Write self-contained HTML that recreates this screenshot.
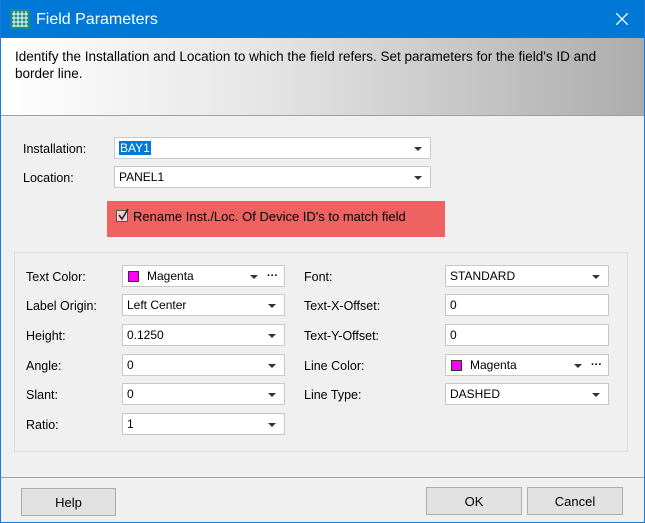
<!DOCTYPE html>
<html><head><style>
*{box-sizing:border-box;margin:0;padding:0}
body{width:645px;height:523px;overflow:hidden;font-family:"Liberation Sans",sans-serif;font-size:12px;color:#000;background:#f0f0f0;position:relative}
.a{position:absolute}
.win{left:0;top:0;width:645px;height:523px;border:1px solid #1a7ad4;border-top:none}
.title{left:0;top:0;width:645px;height:38px;background:#0078d7;color:#fff;font-size:16px}
.hdr{left:1px;top:38px;width:643px;height:78px;background:linear-gradient(90deg,#fff 0%,#e6e6e6 40%,#acacac 100%);border-bottom:1px solid #a0a0a0;font-size:13.5px;line-height:17px;padding:10px 14px}
.cb{background:#fff;border:1px solid #c8c8c8;height:22px;line-height:21px;padding-left:4px;font-size:12px}
.arr{position:absolute;right:8px;top:9px;width:0;height:0;border-left:4px solid transparent;border-right:4px solid transparent;border-top:4px solid #333}
.lbl{font-size:12.5px}
.sw{display:inline-block;width:11px;height:11px;background:#ff00ff;border:1px solid #333;vertical-align:-2px;margin-right:8px;margin-left:1px}
.dots{position:absolute;right:6px;top:0;font-weight:bold;font-size:11px;letter-spacing:0}
.btn{border:1px solid #adadad;background:#e1e1e1;text-align:center;line-height:27px;font-size:13px}
</style></head><body>
<div class="a title">
<svg class="a" style="left:10px;top:9px" width="20" height="20" viewBox="0 0 20 20"><rect width="20" height="20" fill="#1d8a8a"/><g stroke="#fff" stroke-width="1"><path d="M4 2v16M8 2v16M12 2v16M16 2v16M2 5h16M2 9h16M2 13h16M2 17h16"/></g></svg>
<div class="a" style="left:36px;top:11px">Field Parameters</div>
<svg class="a" style="left:616px;top:13px" width="12" height="12"><path d="M0 0L12 12M12 0L0 12" stroke="#fff" stroke-width="1.3"/></svg>
</div>
<div class="a hdr">Identify the Installation and Location to which the field refers. Set parameters for the field's ID and border line.</div>
<div class="a win"></div>

<div class="a lbl" style="left:23px;top:142px">Installation:</div>
<div class="a cb" style="left:114px;top:137px;width:317px"><span style="background:#0078d7;color:#fff;padding:0 1px">BAY1</span><div class="arr"></div></div>
<div class="a lbl" style="left:23px;top:171px">Location:</div>
<div class="a cb" style="left:114px;top:166px;width:317px">PANEL1<div class="arr"></div></div>

<div class="a" style="left:107px;top:201px;width:338px;height:36px;background:#ee6262"></div>
<div class="a" style="left:116px;top:210px;width:12px;height:12px;border:1px solid #555;background:#f4d0d0"></div>
<svg class="a" style="left:116px;top:207px" width="14" height="15"><path d="M3 8l3 4L12 2" stroke="#222" stroke-width="1.6" fill="none"/></svg>
<div class="a" style="left:133px;top:209px;font-size:13px">Rename Inst./Loc. Of Device ID's to match field</div>

<div class="a" style="left:14px;top:252px;width:614px;height:200px;border:1px solid #dcdcdc"></div>

<div class="a lbl" style="left:26px;top:270px">Text Color:</div>
<div class="a cb" style="left:122px;top:265px;width:163px"><span class="sw"></span>Magenta<div class="arr" style="right:26px"></div><span class="dots">···</span></div>
<div class="a lbl" style="left:26px;top:299px">Label Origin:</div>
<div class="a cb" style="left:122px;top:294px;width:163px">Left Center<div class="arr"></div></div>
<div class="a lbl" style="left:26px;top:329px">Height:</div>
<div class="a cb" style="left:122px;top:324px;width:163px">0.1250<div class="arr"></div></div>
<div class="a lbl" style="left:26px;top:359px">Angle:</div>
<div class="a cb" style="left:122px;top:354px;width:163px">0<div class="arr"></div></div>
<div class="a lbl" style="left:26px;top:388px">Slant:</div>
<div class="a cb" style="left:122px;top:383px;width:163px">0<div class="arr"></div></div>
<div class="a lbl" style="left:26px;top:418px">Ratio:</div>
<div class="a cb" style="left:122px;top:413px;width:163px">1<div class="arr"></div></div>

<div class="a lbl" style="left:304px;top:270px">Font:</div>
<div class="a cb" style="left:445px;top:265px;width:164px">STANDARD<div class="arr"></div></div>
<div class="a lbl" style="left:304px;top:299px">Text-X-Offset:</div>
<div class="a cb" style="left:445px;top:294px;width:164px">0</div>
<div class="a lbl" style="left:304px;top:329px">Text-Y-Offset:</div>
<div class="a cb" style="left:445px;top:324px;width:164px">0</div>
<div class="a lbl" style="left:304px;top:359px">Line Color:</div>
<div class="a cb" style="left:445px;top:354px;width:164px"><span class="sw"></span>Magenta<div class="arr" style="right:26px"></div><span class="dots">···</span></div>
<div class="a lbl" style="left:304px;top:388px">Line Type:</div>
<div class="a cb" style="left:445px;top:383px;width:164px">DASHED<div class="arr"></div></div>

<div class="a" style="left:1px;top:477px;width:643px;height:1px;background:#a0a0a0"></div>
<div class="a btn" style="left:21px;top:488px;width:95px;height:28px">Help</div>
<div class="a btn" style="left:426px;top:487px;width:96px;height:28px">OK</div>
<div class="a btn" style="left:527px;top:487px;width:96px;height:28px">Cancel</div>
</body></html>
